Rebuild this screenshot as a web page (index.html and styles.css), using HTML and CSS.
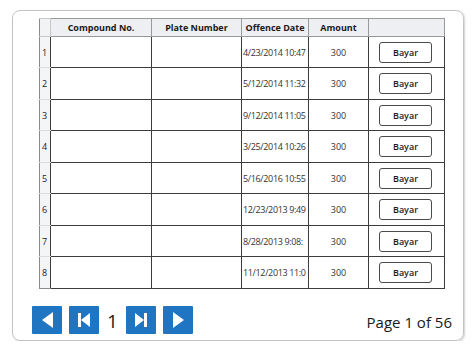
FILE: index.html
```html
<!DOCTYPE html>
<html>
<head>
<meta charset="utf-8">
<link rel="stylesheet" href="styles.css">
</head>
<body>
<div class="panel">
  <table class="grid">
    <colgroup>
      <col class="c-num"><col class="c-comp"><col class="c-plate"><col class="c-date"><col class="c-amt"><col class="c-act">
    </colgroup>
    <thead>
      <tr><th class="rh"></th><th>Compound No.</th><th>Plate Number</th><th>Offence Date</th><th>Amount</th><th></th></tr>
    </thead>
    <tbody>
      <tr><td class="rh">1</td><td></td><td></td><td class="date"><div class="clip">4/23/2014 10:47</div></td><td class="amt">300</td><td class="act"><button class="pay">Bayar</button></td></tr>
      <tr><td class="rh">2</td><td></td><td></td><td class="date"><div class="clip">5/12/2014 11:32</div></td><td class="amt">300</td><td class="act"><button class="pay">Bayar</button></td></tr>
      <tr><td class="rh">3</td><td></td><td></td><td class="date"><div class="clip">9/12/2014 11:05</div></td><td class="amt">300</td><td class="act"><button class="pay">Bayar</button></td></tr>
      <tr><td class="rh">4</td><td></td><td></td><td class="date"><div class="clip">3/25/2014 10:26</div></td><td class="amt">300</td><td class="act"><button class="pay">Bayar</button></td></tr>
      <tr><td class="rh">5</td><td></td><td></td><td class="date"><div class="clip">5/16/2016 10:55</div></td><td class="amt">300</td><td class="act"><button class="pay">Bayar</button></td></tr>
      <tr><td class="rh">6</td><td></td><td></td><td class="date"><div class="clip">12/23/2013 9:49</div></td><td class="amt">300</td><td class="act"><button class="pay">Bayar</button></td></tr>
      <tr><td class="rh">7</td><td></td><td></td><td class="date"><div class="clip">8/28/2013 9:08:</div></td><td class="amt">300</td><td class="act"><button class="pay">Bayar</button></td></tr>
      <tr><td class="rh">8</td><td></td><td></td><td class="date"><div class="clip">11/12/2013 11:0</div></td><td class="amt">300</td><td class="act"><button class="pay">Bayar</button></td></tr>
    </tbody>
  </table>
  <div class="pager">
    <div class="nav">
      <button class="pbtn" aria-label="Previous"><svg width="30" height="28" viewBox="0 0 30 28"><polygon points="21,6 21,22 10,14" fill="#fff"/></svg></button>
      <button class="pbtn" aria-label="First"><svg width="30" height="28" viewBox="0 0 30 28"><rect x="9" y="7" width="3" height="14" fill="#fff"/><polygon points="21,7 21,21 12,14" fill="#fff"/></svg></button>
      <span class="cur">1</span>
      <button class="pbtn" aria-label="Last"><svg width="30" height="28" viewBox="0 0 30 28"><polygon points="9,7 9,21 18,14" fill="#fff"/><rect x="18" y="7" width="3" height="14" fill="#fff"/></svg></button>
      <button class="pbtn" aria-label="Next"><svg width="30" height="28" viewBox="0 0 30 28"><polygon points="10,6 10,22 21,14" fill="#fff"/></svg></button>
    </div>
    <div class="info">Page 1 of 56</div>
  </div>
</div>
</body>
</html>
```

FILE: styles.css
```css
html, body {
  margin: 0;
  padding: 0;
  background: #fff;
}
body {
  font-family: "Open Sans", "Noto Sans", sans-serif;
  color: #222;
}
.panel {
  box-sizing: border-box;
  margin: 10px 0 0 12px;
  width: 452px;
  height: 331px;
  border: 1px solid #c4c4c4;
  border-radius: 8px;
  box-shadow: 1px 1px 2px rgba(0,0,0,0.18);
  padding: 7px 0 0 26px;
}
.grid {
  border-collapse: collapse;
  table-layout: fixed;
  width: 405px;
  font-size: 9px;
}
.c-num { width: 11px; }
.c-comp { width: 101px; }
.c-plate { width: 90px; }
.c-date { width: 67px; }
.c-amt { width: 60px; }
.c-act { width: 76px; }
.grid th {
  height: 17px;
  padding: 0;
  background: #eeeff2;
  border: 1px solid #9a9a9a;
  font-weight: 700;
  font-size: 9px;
  color: #1a1a1a;
  text-align: center;
}
.grid td {
  height: 30px;
  padding: 0;
  border: 1px solid #3c3c3c;
  color: #333;
}
.grid tbody tr:nth-child(even) td { height: 31px; }
.grid th.rh {
  background: #f2f3f5;
  border-color: #c9c9c9;
  border-left-color: #8a8a8a;
}
.grid td.rh {
  background: #f4f5f7;
  border: 1px solid #dcdcdc;
  border-left-color: #8a8a8a;
  border-right-color: #3c3c3c;
  padding-left: 2px;
  font-size: 9px;
  color: #222;
}
.grid tbody tr:last-child td.rh { border-bottom-color: #8a8a8a; }
.grid td.date { padding-left: 1px; }
.clip {
  white-space: nowrap;
  overflow: hidden;
  letter-spacing: -0.35px;
}
.grid td.amt { text-align: center; }
.grid td.act { text-align: center; }
.pay {
  width: 53px;
  height: 21px;
  padding: 0;
  background: #fff;
  border: 1px solid #4a4a4a;
  border-radius: 3px;
  font-family: inherit;
  font-size: 9px;
  font-weight: 600;
  color: #1a1a1a;
  margin-left: -2px;
}
.pager {
  display: flex;
  align-items: center;
  justify-content: space-between;
  margin: 15px 11px 0 -7px;
}
.nav {
  display: flex;
  align-items: center;
  gap: 7px;
}
.pbtn {
  width: 30px;
  height: 28px;
  padding: 0;
  border: 0;
  border-radius: 1px;
  background: #1f75c1;
  display: flex;
  align-items: center;
  justify-content: center;
}
.pbtn svg { display: block; }
.cur {
  width: 13px;
  text-align: center;
  font-size: 19px;
  color: #222;
  line-height: 28px;
  margin-top: 3px;
}
.info {
  font-size: 15px;
  color: #1a1a1a;
  margin-top: 5px;
}
```
